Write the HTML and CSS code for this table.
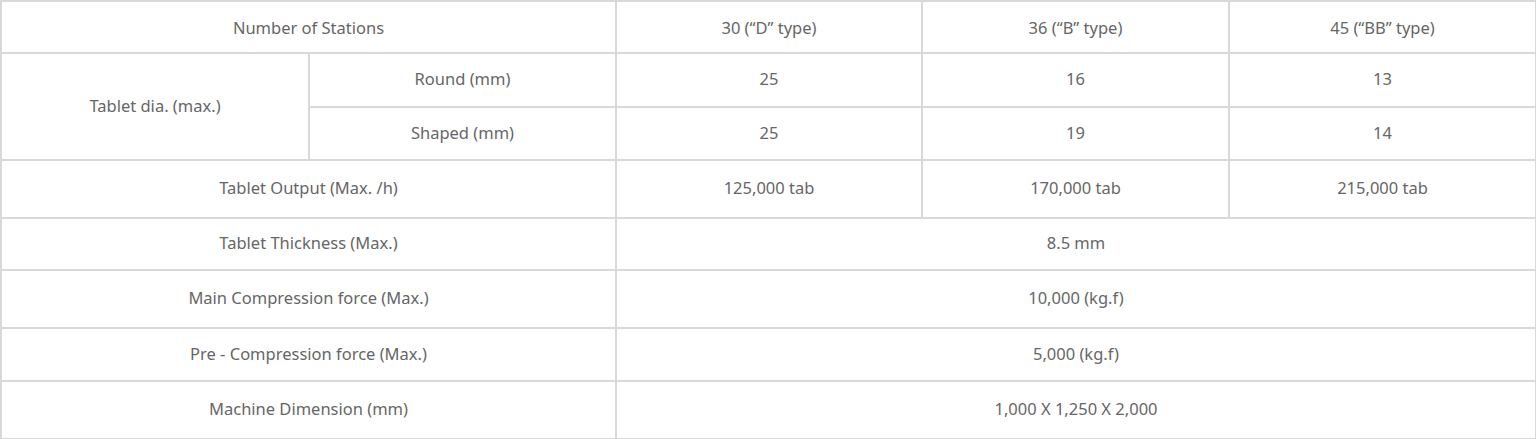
FILE: index.html
```html
<!DOCTYPE html>
<html lang="en">
<head>
<meta charset="utf-8">
<title>Specifications</title>
<link rel="stylesheet" href="styles.css">
</head>
<body>
<table class="spec">
  <colgroup>
    <col class="c1"><col class="c2"><col class="c3"><col class="c4"><col class="c5">
  </colgroup>
  <tbody>
    <tr class="r1">
      <td colspan="2">Number of Stations</td>
      <td>30 (“D” type)</td>
      <td>36 (“B” type)</td>
      <td>45 (“BB” type)</td>
    </tr>
    <tr class="r2">
      <td rowspan="2">Tablet dia. (max.)</td>
      <td>Round (mm)</td>
      <td>25</td>
      <td>16</td>
      <td>13</td>
    </tr>
    <tr class="r3">
      <td>Shaped (mm)</td>
      <td>25</td>
      <td>19</td>
      <td>14</td>
    </tr>
    <tr class="r4">
      <td colspan="2">Tablet Output (Max. /h)</td>
      <td>125,000 tab</td>
      <td>170,000 tab</td>
      <td>215,000 tab</td>
    </tr>
    <tr class="r5">
      <td colspan="2">Tablet Thickness (Max.)</td>
      <td colspan="3">8.5 mm</td>
    </tr>
    <tr class="r6">
      <td colspan="2">Main Compression force (Max.)</td>
      <td colspan="3">10,000 (kg.f)</td>
    </tr>
    <tr class="r7">
      <td colspan="2">Pre - Compression force (Max.)</td>
      <td colspan="3">5,000 (kg.f)</td>
    </tr>
    <tr class="r8">
      <td colspan="2">Machine Dimension (mm)</td>
      <td colspan="3">1,000 X 1,250 X 2,000</td>
    </tr>
  </tbody>
</table>
</body>
</html>
```
FILE: styles.css
```css
html, body {
  margin: 0;
  padding: 0;
  background: #ffffff;
}
.spec {
  width: 1535px;
  table-layout: fixed;
  border-collapse: collapse;
  font-family: "Noto Sans", "Open Sans", sans-serif;
  font-size: 16.5px;
  color: #666666;
}
.c1 { width: 308px; }
.c2 { width: 307px; }
.c3 { width: 306px; }
.c4 { width: 307px; }
.c5 { width: 307px; }
.spec td {
  border: 2px solid #d9d9d9;
  text-align: center;
  vertical-align: middle;
  padding: 0 0 2px 0;
  line-height: 20px;
}
.spec .r1 td {
  padding: 2px 0 0 0;
}
.r1 { height: 52px; }
.r2 { height: 54px; }
.r3 { height: 53px; }
.r4 { height: 58px; }
.r5 { height: 52px; }
.r6 { height: 58px; }
.r7 { height: 53px; }
.r8 { height: 58px; }
```
